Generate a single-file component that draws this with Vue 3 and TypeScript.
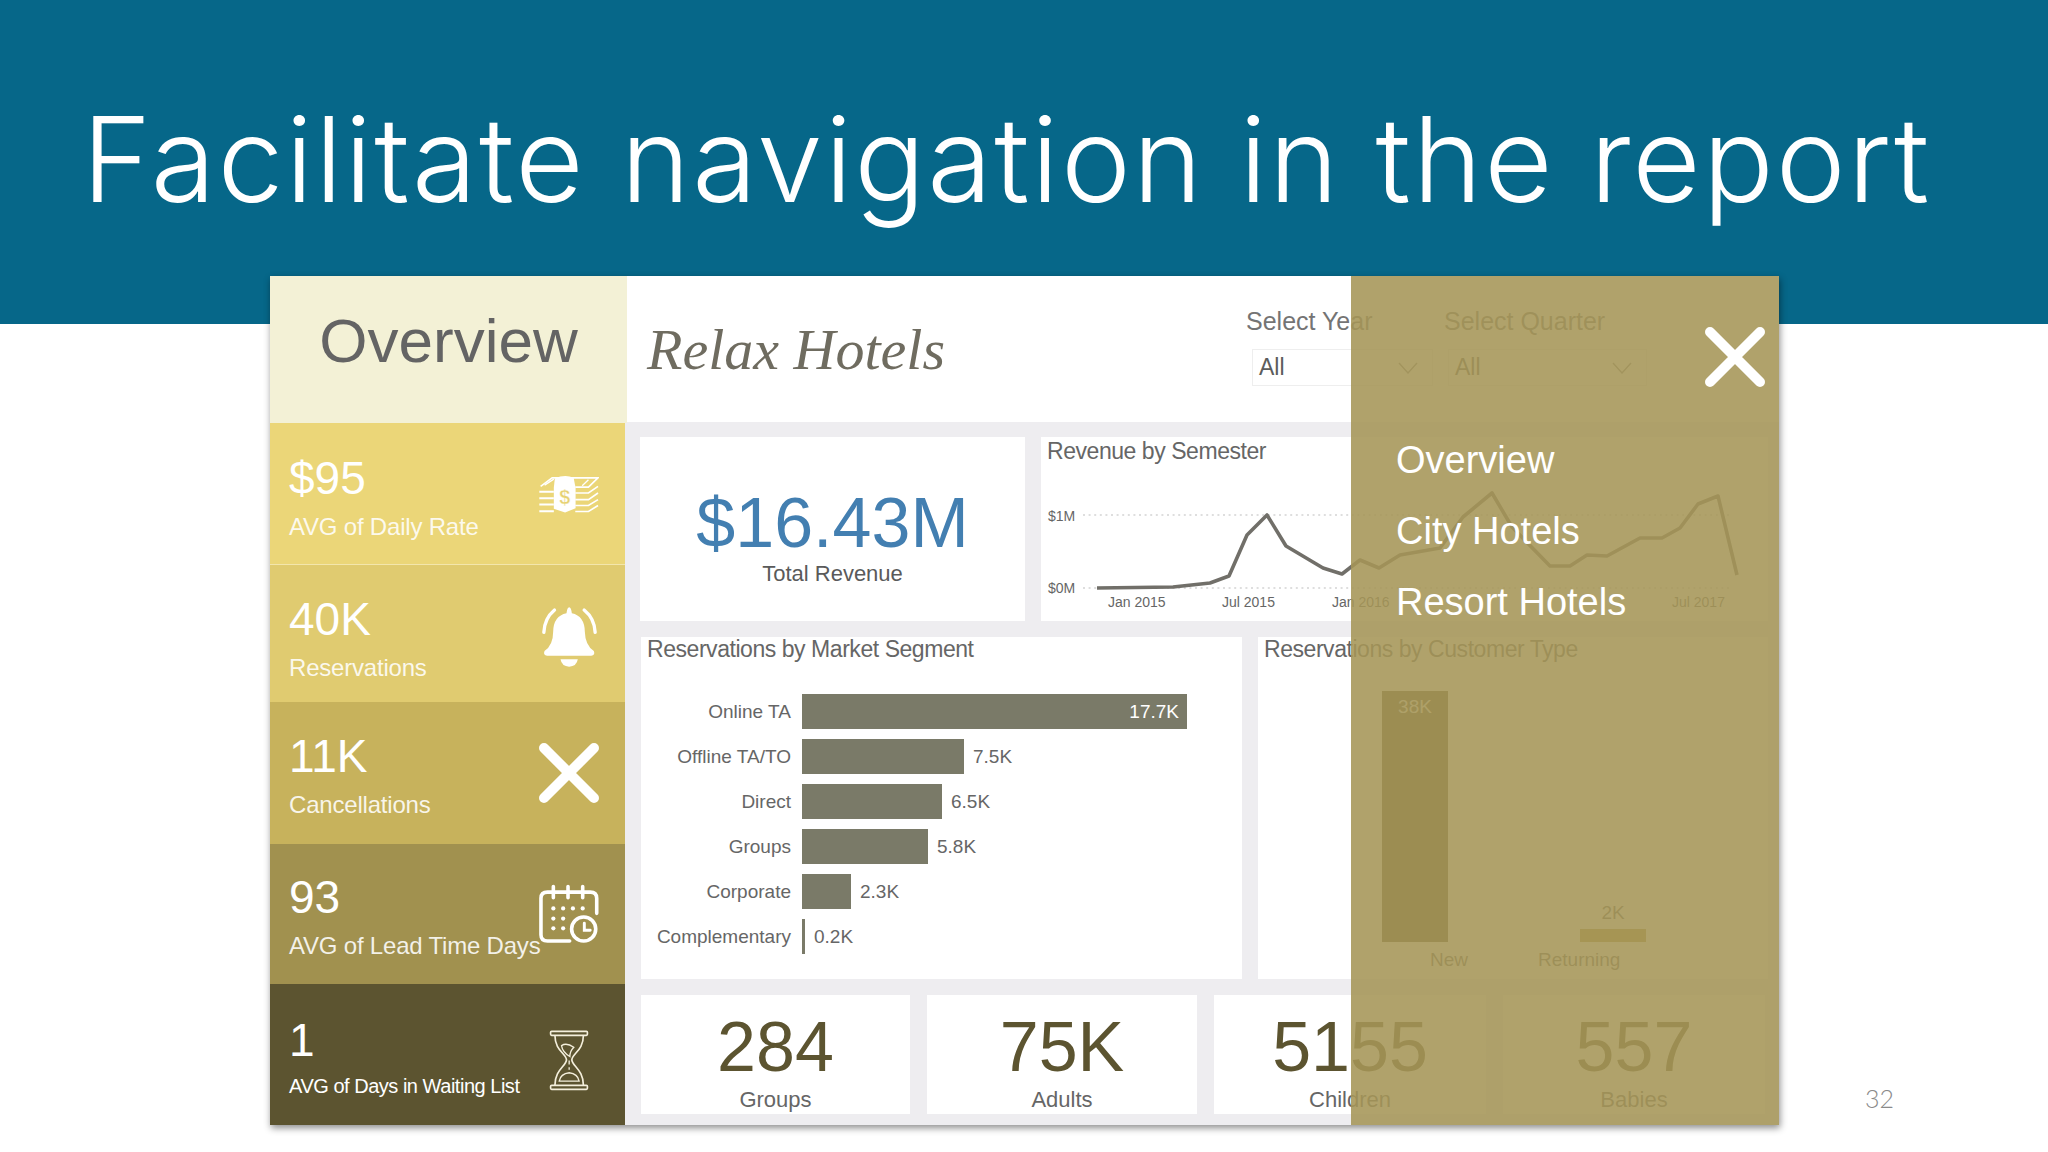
<script setup lang="ts">
interface Kpi { value: string; label: string; height: number; icon: string; small?: boolean; nudge: number }
const kpis: Kpi[] = [
  { value: '$95', label: 'AVG of Daily Rate', height: 142, icon: 'money', nudge: 0 },
  { value: '40K', label: 'Reservations', height: 137, icon: 'bell', nudge: 3 },
  { value: '11K', label: 'Cancellations', height: 141.5, icon: 'x', nudge: -2 },
  { value: '93', label: 'AVG of Lead Time Days', height: 140.5, icon: 'cal', nudge: -2 },
  { value: '1', label: 'AVG of Days in Waiting List', height: 141, icon: 'glass', small: true, nudge: -1 }
]
const segments = [
  { name: 'Online TA', width: 385, value: '17.7K', inside: true },
  { name: 'Offline TA/TO', width: 162, value: '7.5K', inside: false },
  { name: 'Direct', width: 140, value: '6.5K', inside: false },
  { name: 'Groups', width: 126, value: '5.8K', inside: false },
  { name: 'Corporate', width: 49, value: '2.3K', inside: false },
  { name: 'Complementary', width: 3, value: '0.2K', inside: false }
]
const stats = [
  { value: '284', label: 'Groups', width: 269 },
  { value: '75K', label: 'Adults', width: 270 },
  { value: '5155', label: 'Children', width: 272 },
  { value: '557', label: 'Babies', width: 262 }
]
const linePoints: number[][] = [
  [1097,588],[1173,587],[1210,583],[1229,576],[1247,535],[1267,515],[1286,546],[1323,568],[1342,574],
  [1360,560],[1379,568],[1400,555],[1440,548],[1463,517],[1492,493],[1512,527],[1550,566],[1570,566],
  [1587,555],[1607,556],[1640,538],[1662,538],[1680,528],[1698,504],[1718,496],[1737,575]
]
const line = linePoints.map(p => `${p[0] - 1041},${p[1] - 437}`).join(' ')
const axis = [
  { text: 'Jan 2015', x: 67 },
  { text: 'Jul 2015', x: 181 },
  { text: 'Jan 2016', x: 291 },
  { text: 'Jul 2017', x: 631 }
]
const menu = ['Overview', 'City Hotels', 'Resort Hotels']
const filters = [
  { label: 'Select Year', cls: 'f-year' },
  { label: 'Select Quarter', cls: 'f-quarter' }
]
</script>

<template>
  <div class="slide">
    <header class="banner">
      <h1 class="title">Facilitate navigation in the report</h1>
    </header>

    <div class="stage">
      <section class="dash">
        <aside class="side">
          <div class="side-head">Overview</div>
          <div
            v-for="(k, i) in kpis"
            :key="k.value"
            class="kpi"
            :class="`kpi-${i}`"
            :style="{ height: k.height + 'px' }"
          >
            <div class="kpi-text" :style="{ marginTop: k.nudge + 'px' }">
              <div class="kpi-value">{{ k.value }}</div>
              <div class="kpi-label" :class="{ small: k.small }">{{ k.label }}</div>
            </div>
            <div class="kpi-icon">
              <svg v-if="k.icon === 'money'" class="ic-money" viewBox="55 78 182 114" fill="none" stroke="#fff">
                <path d="M60 112 L95 86 H234 L205 114 H165" stroke-width="5" />
                <path d="M72 108 L100 90 M205 92 L186 110" stroke-width="4" />
                <path d="M56 128 H100 M56 148 H100 M56 167 H100 M56 187 H100" stroke-width="6" />
                <path d="M165 132 H205 L234 112 M165 152 H205 L234 132 M165 170 H205 L234 152 M165 188 H205 L234 170" stroke-width="5" />
                <path d="M103 88 Q134 74 160 86 L166 116 V178 L134 191 L100 180 V116 Z" fill="#fff" stroke="none" />
                <text x="133" y="166" text-anchor="middle" class="ic-dollar">$</text>
              </svg>
              <svg v-else-if="k.icon === 'bell'" class="ic-bell" viewBox="62 468 170 186" fill="#fff">
                <path d="M138 490 Q140 472 146 472 Q152 472 154 490 Q192 498 193 545 Q194 585 220 603 Q225 616 212 617 H80 Q67 616 72 603 Q98 585 98 545 Q99 498 138 490 Z" />
                <path d="M120 628 H172 Q168 650 146 650 Q124 650 120 628 Z" />
                <path d="M102 480 Q72 505 70 547 M191 480 Q222 505 224 547" fill="none" stroke="#fff" stroke-width="10" stroke-linecap="round" />
              </svg>
              <svg v-else-if="k.icon === 'x'" class="ic-x" viewBox="0 0 60 60" fill="none" stroke="#fff" stroke-width="10" stroke-linecap="round">
                <path d="M5 5 L55 55 M55 5 L5 55" />
              </svg>
              <svg v-else-if="k.icon === 'cal'" class="ic-cal" viewBox="56 72 184 180" fill="none" stroke="#fff" stroke-width="11" stroke-linecap="round">
                <path d="M150 245 H82 Q62 245 62 226 V114 Q62 95 82 95 H213 Q233 95 233 114 V160" />
                <path d="M100 78 V112 M145 78 V112 M190 78 V112" />
                <circle cx="193" cy="208" r="37" />
                <path d="M195 190 V212 H213" stroke-width="9" />
                <g fill="#fff" stroke="none">
                  <circle cx="100" cy="145" r="6.5" /><circle cx="130" cy="145" r="6.5" /><circle cx="160" cy="145" r="6.5" /><circle cx="190" cy="145" r="6.5" />
                  <circle cx="100" cy="176" r="6.5" /><circle cx="130" cy="176" r="6.5" />
                  <circle cx="100" cy="206" r="6.5" /><circle cx="130" cy="206" r="6.5" />
                </g>
              </svg>
              <svg v-else class="ic-glass" viewBox="88 508 119 184" fill="none" stroke="#f4efdc" stroke-width="5">
                <rect x="92" y="512" width="111" height="12" rx="3" />
                <rect x="92" y="675" width="111" height="12" rx="3" />
                <path d="M105 524 C105 570 138 578 140 598 C138 618 105 628 105 675" />
                <path d="M191 524 C191 570 158 578 156 598 C158 618 191 628 191 675" />
                <path d="M125 555 Q140 545 162 560 Q150 572 150 588 Q128 575 125 555 Z" stroke-width="4" />
                <path d="M118 662 Q122 640 148 637 Q174 640 178 662 Z" stroke-width="4" />
                <path d="M148 600 V612 M148 620 V628" stroke-width="4" />
              </svg>
            </div>
          </div>
        </aside>

        <main class="main">
          <div class="topbar">
            <div class="brand">Relax Hotels</div>
            <div class="filters">
              <div v-for="f in filters" :key="f.label" class="filter" :class="f.cls">
                <div class="filter-label">{{ f.label }}</div>
                <div class="filter-box">
                  <span>All</span>
                  <svg class="chev" viewBox="0 0 20 12" fill="none" stroke="#888" stroke-width="1.4"><path d="M1 1 L10 11 L19 1" /></svg>
                </div>
              </div>
            </div>
          </div>

          <div class="content">
            <div class="row row-1">
              <div class="card revenue">
                <div class="revenue-value">$16.43M</div>
                <div class="revenue-label">Total Revenue</div>
              </div>
              <div class="card semester">
                <div class="card-title">Revenue by Semester</div>
                <svg class="line-chart" viewBox="0 0 727 184" width="727" height="184">
                  <text x="7" y="84" class="axis">$1M</text>
                  <text x="7" y="156" class="axis">$0M</text>
                  <path d="M42 78 H690 M42 151 H690" stroke="#d4d4d4" stroke-width="1.5" stroke-dasharray="2 3.6" fill="none" />
                  <polyline :points="line" fill="none" stroke="#716f69" stroke-width="3.6" stroke-linejoin="round" />
                  <text v-for="a in axis" :key="a.text" :x="a.x" y="170" class="axis">{{ a.text }}</text>
                </svg>
              </div>
            </div>

            <div class="row row-2">
              <div class="card market">
                <div class="card-title">Reservations by Market Segment</div>
                <div class="bars">
                  <div v-for="s in segments" :key="s.name" class="bar-row">
                    <div class="bar-name">{{ s.name }}</div>
                    <div class="bar" :style="{ width: s.width + 'px' }">
                      <span v-if="s.inside" class="bar-in">{{ s.value }}</span>
                    </div>
                    <span v-if="!s.inside" class="bar-val">{{ s.value }}</span>
                  </div>
                </div>
              </div>
              <div class="card customer">
                <div class="card-title">Reservations by Customer Type</div>
                <div class="columns">
                  <div class="col col-new"><span>38K</span></div>
                  <div class="col-wrap">
                    <span class="col-val">2K</span>
                    <div class="col col-ret"></div>
                  </div>
                </div>
                <div class="col-names">
                  <span>New</span>
                  <span>Returning</span>
                </div>
              </div>
            </div>

            <div class="row row-3">
              <div v-for="s in stats" :key="s.label" class="card stat" :style="{ width: s.width + 'px' }">
                <div class="stat-value">{{ s.value }}</div>
                <div class="stat-label">{{ s.label }}</div>
              </div>
            </div>
          </div>
        </main>

        <nav class="drawer">
          <svg class="drawer-x" viewBox="0 0 60 60" fill="none" stroke="#fff" stroke-width="10" stroke-linecap="round">
            <path d="M5 5 L55 55 M55 5 L5 55" />
          </svg>
          <div class="drawer-menu">
            <div v-for="m in menu" :key="m" class="drawer-item">{{ m }}</div>
          </div>
        </nav>
      </section>
      <div class="page-no">32</div>
    </div>
  </div>
</template>

<style scoped>
.slide {
  width: 2048px;
  height: 1152px;
  background: #fff;
  overflow: hidden;
  font-family: "Liberation Sans", Arial, sans-serif;
}
.banner {
  height: 324px;
  background: #066789;
  padding: 88px 0 0 82px;
  box-sizing: border-box;
}
.title {
  margin: 0;
  color: #fff;
  font-family: Inter, Lato, sans-serif;
  font-weight: 300;
  font-size: 118px;
  line-height: 142px;
  letter-spacing: 2px;
  font-variant-ligatures: none;
  white-space: nowrap;
}
.stage {
  display: flex;
  margin-top: -48px;
  padding-left: 270px;
}
.dash {
  position: relative;
  display: flex;
  width: 1509px;
  height: 849px;
  flex: none;
  box-shadow: 1px 3px 7px rgba(0, 0, 0, 0.45);
}
.page-no {
  align-self: flex-end;
  margin: 0 0 12px 86px;
  font-family: Lato, sans-serif;
  font-weight: 300;
  font-size: 25px;
  line-height: 30px;
  color: #8a8a8a;
}

/* sidebar */
.side {
  width: 355px;
  flex: none;
  display: flex;
  flex-direction: column;
}
.side-head {
  position: relative;
  z-index: 1;
  width: 357px;
  height: 147px;
  flex: none;
  box-sizing: border-box;
  padding-top: 29px;
  background: #f3f1d6;
  color: #646464;
  font-size: 62px;
  line-height: 72px;
  text-align: center;
}
.kpi {
  display: flex;
  align-items: center;
  justify-content: space-between;
  box-sizing: border-box;
  padding: 0 27px 0 19px;
  color: #fff;
}
.kpi-0 { background: #ebd678; border-bottom: 1px solid #f3e6ac; }
.kpi-1 { background: #e0cb70; }
.kpi-2 { background: #c7b25c; }
.kpi-3 { background: #a1914f; }
.kpi-4 { background: #5c5430; }
.kpi-text {
  padding-top: 6px;
  white-space: nowrap;
  min-width: 0;
  flex: none;
  width: 250px;
}
.kpi-value {
  font-size: 46px;
  line-height: 46px;
}
.kpi-label {
  margin-top: 14px;
  font-size: 24px;
  line-height: 24px;
  letter-spacing: -0.2px;
  color: rgba(255, 255, 255, 0.88);
}
.kpi-label.small {
  margin-top: 11px;
  font-size: 20px;
  letter-spacing: -0.48px;
  color: #fff;
}
.kpi-icon {
  width: 60px;
  flex: none;
  display: flex;
  justify-content: center;
}
.kpi-icon svg { display: block; }
.ic-money { width: 61px; height: 38px; }
.ic-dollar { font: 700 60px "Liberation Sans", sans-serif; fill: #e6d172; }
.ic-bell { width: 57px; height: 62px; margin-top: 6px; }
.ic-x { width: 60px; height: 60px; }
.ic-cal { width: 61px; height: 60px; }
.ic-glass { width: 40px; height: 61px; margin-top: 11px; }

/* main */
.main {
  flex: 1;
  min-width: 0;
  background: #eeedf0;
  display: flex;
  flex-direction: column;
}
.topbar {
  position: relative;
  height: 146px;
  margin-left: 2px;
  flex: none;
  display: flex;
  justify-content: space-between;
  background: #fff;
  box-sizing: border-box;
}
.brand {
  padding: 42px 0 0 20px;
  font-family: "Liberation Serif", serif;
  font-style: italic;
  font-size: 58px;
  line-height: 64px;
  color: #6f6c60;
}
.filters {
  display: flex;
  gap: 21px;
  padding: 31px 139px 0 0;
}
.filter { width: 177px; }
.f-quarter { width: 196px; }
.filter-label {
  font-size: 25px;
  line-height: 28px;
  color: #747474;
  white-space: nowrap;
}
.f-year .filter-box { margin-left: 6px; width: 181px; }
.f-quarter .filter-box { margin-left: 4px; width: 199px; }
.filter-box {
  display: flex;
  justify-content: space-between;
  align-items: center;
  box-sizing: border-box;
  margin-top: 14px;
  height: 37px;
  padding: 0 14px 0 6px;
  border: 1px solid #eeeeee;
  font-size: 23px;
  color: #5c5c5c;
}
.chev { width: 20px; height: 12px; }

.content {
  padding: 15px 11px 0 16px;
  display: flex;
  flex-direction: column;
  gap: 16px;
}
.row { display: flex; gap: 16px; }
.card {
  background: #fff;
  box-sizing: border-box;
  flex: none;
}
.row-1 .card { height: 184px; }
.revenue {
  width: 385px;
  text-align: center;
  padding-top: 51px;
  margin-left: -1px;
}
.revenue-value {
  font-size: 70px;
  line-height: 70px;
  color: #437fb1;
}
.revenue-label {
  margin-top: 3px;
  font-size: 22px;
  line-height: 26px;
  color: #5a5a5a;
}
.semester {
  position: relative;
  width: 727px;
}
.card-title {
  padding: 0 0 0 6px;
  font-size: 23px;
  line-height: 24px;
  color: #666;
  white-space: nowrap;
  letter-spacing: -0.45px;
}
.semester .card-title { position: relative; padding-top: 2px; z-index: 1; }
.line-chart {
  position: absolute;
  left: 0;
  top: 0;
  display: block;
}
.axis {
  font: 14px "Liberation Sans", sans-serif;
  fill: #666;
}

.row-2 .card { height: 342px; }
.market { width: 601px; }
.bars {
  margin-top: 33px;
  display: flex;
  flex-direction: column;
  gap: 10px;
}
.bar-row {
  display: flex;
  align-items: center;
  height: 35px;
}
.bar-name {
  width: 150px;
  margin-right: 11px;
  text-align: right;
  font-size: 19px;
  color: #666;
  white-space: nowrap;
}
.bar {
  height: 35px;
  background: #7a7a68;
  position: relative;
  display: flex;
  align-items: center;
  justify-content: flex-end;
}
.bar-in {
  padding-right: 8px;
  color: #fff;
  font-size: 19px;
}
.bar-val {
  margin-left: 9px;
  font-size: 19px;
  color: #666;
}
.customer {
  width: 510px;
  position: relative;
}
.columns {
  position: relative;
  height: 251px;
  margin-top: 30px;
  display: flex;
  align-items: flex-end;
  padding-left: 124px;
  gap: 132px;
}
.col {
  width: 66px;
  box-sizing: border-box;
  text-align: center;
}
.col-new {
  height: 251px;
  background: #5c5430;
  color: rgba(255, 255, 255, 0.9);
  font-size: 19px;
  padding-top: 5px;
}
.col-wrap { display: flex; flex-direction: column; align-items: center; gap: 5px; font-size: 19px; color: #666; }
.col-ret {
  height: 13px;
  background: #a89440;
}
.col-names {
  display: flex;
  margin-top: 7px;
  padding-left: 172px;
  gap: 70px;
  font-size: 19px;
  color: #666;
}

.row-3 { gap: 17px; }
.stat {
  height: 119px;
  text-align: center;
}
.stat-value {
  padding-top: 17px;
  font-size: 70px;
  line-height: 70px;
  color: #5c5430;
}
.stat-label {
  margin-top: 5px;
  font-size: 22px;
  line-height: 26px;
  color: #666;
}

/* overlay drawer */
.drawer {
  position: absolute;
  top: 0;
  bottom: 0;
  left: 1081px;
  right: 0;
  z-index: 2;
  background: rgba(165, 149, 87, 0.88);
}
.drawer-x {
  position: absolute;
  top: 51px;
  left: 354px;
  width: 60px;
  height: 60px;
}
.drawer-menu {
  padding: 149px 0 0 45px;
}
.drawer-item {
  height: 71px;
  line-height: 71px;
  font-size: 38px;
  color: #fff;
  white-space: nowrap;
}
</style>

<style>
html, body { margin: 0; background: #fff; }
</style>
